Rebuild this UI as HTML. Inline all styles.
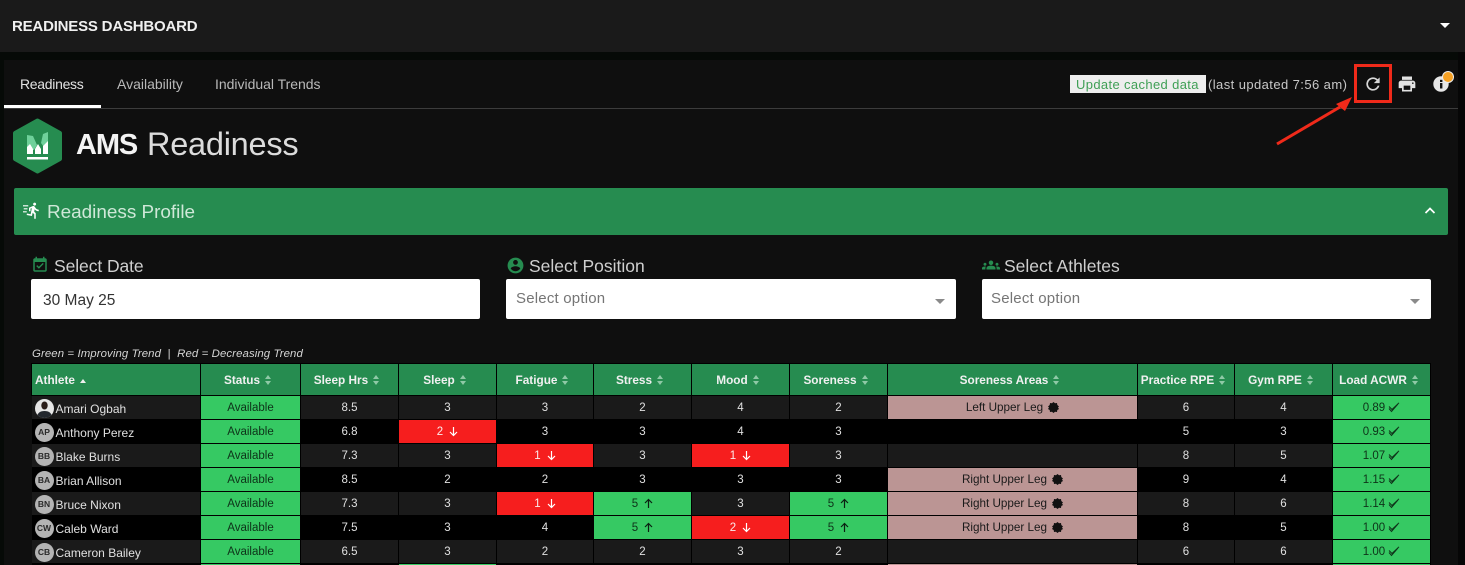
<!DOCTYPE html>
<html><head><meta charset="utf-8"><style>
*{box-sizing:border-box}
html,body{margin:0;padding:0;width:1465px;height:565px;overflow:hidden;background:#060a07;font-family:"Liberation Sans",sans-serif}
#wrap{position:absolute;left:0;top:0;width:1465px;height:565px;overflow:hidden;background:#060a07}
.a{position:absolute;white-space:nowrap}
#top{left:0;top:0;width:1465px;height:52px;background:#1a1a1a}
#card{left:4px;top:60px;width:1454px;height:505px;background:#0f0f0f}
#right{left:1458px;top:52px;width:7px;height:513px;background:#060606}
.tab{top:76px;font-size:14px;line-height:17px;color:#b9b9b9}
.lab{top:256px;font-size:17.5px;line-height:21px;color:#cfcfcf}
.inp{top:279px;height:40px;background:#fff;border-radius:2px}
.ph{top:290px;font-size:15px;line-height:17px;color:#757575;letter-spacing:.2px}
.car{top:299px;width:0;height:0;border-left:5px solid transparent;border-right:5px solid transparent;border-top:5px solid #8a8a8a}
table{position:absolute;left:31px;top:363px;border-collapse:collapse;table-layout:fixed;width:1399px}
th{background:#268c50;color:#f0f0f0;font-size:11.8px;font-weight:bold;height:32px;padding:1px 5px 0 0;border:1px solid #000;text-align:center;white-space:nowrap}
td{height:24px;padding:1px 0 0;font-size:11.5px;line-height:14px;text-align:center;color:#e0e0e0;border:1px solid #000;border-width:0 1px 1px 0;white-space:nowrap}
tr.o td{background:#1a1a1a}
tr.e td{background:#000}
tr td.g{background:#36c963;color:#0e3319}
tr td.r{background:#f61e1e;color:#fbeaea}
tr td.p{background:#bb9594;color:#1a1a1a;font-size:11.7px}
td.n{text-align:left;padding:2px 0 0 3px;font-size:12px}
.av{display:inline-block;width:19px;height:19px;margin:-4px 2px -3px 0;border-radius:50%;background:#b4b4b4;color:#2a2a2a;font-size:8.5px;font-weight:bold;line-height:19px;text-align:center;vertical-align:middle}
.s{display:inline-block;width:7px;height:10px;margin-left:5px;position:relative;vertical-align:-1px}
.s:before,.s:after{content:"";position:absolute;left:0;width:0;height:0;border-left:3.5px solid transparent;border-right:3.5px solid transparent}
.s:before{top:0;border-bottom:4px solid #8fc9a6}
.s:after{bottom:0;border-top:4px solid #8fc9a6}
.u{display:inline-block;width:0;height:0;margin-left:5px;border-left:3.5px solid transparent;border-right:3.5px solid transparent;border-bottom:4px solid #f0f0f0;vertical-align:1px}
td svg{vertical-align:0;margin:-2px 0 -2px 3px}
td svg.ar{margin-left:6px}
</style></head><body>
<div id="wrap">
<div class="a" id="top"></div>
<div class="a" style="left:12px;top:17px;font-size:15px;line-height:19px;font-weight:bold;color:#f0f0f0;letter-spacing:-.2px">READINESS DASHBOARD</div>
<div class="a" style="left:1440px;top:23px;width:0;height:0;border-left:5px solid transparent;border-right:5px solid transparent;border-top:5px solid #fff"></div>
<div class="a" id="right"></div>
<div class="a" id="card"></div>
<div class="a" style="left:4px;top:108px;width:1454px;height:1px;background:#3c3c3c"></div>
<div class="a" style="left:4px;top:105px;width:97px;height:3px;background:#fff"></div>
<div class="a tab" style="left:20px;color:#e2e2e2;letter-spacing:-.3px">Readiness</div>
<div class="a tab" style="left:117px;letter-spacing:0">Availability</div>
<div class="a tab" style="left:215px;letter-spacing:-.02px">Individual Trends</div>

<div class="a" style="left:1070px;top:75px;width:136px;height:18px;background:#eeeeee"></div>
<div class="a" style="left:1076px;top:77px;font-size:13px;line-height:16px;color:#3f9f55;letter-spacing:.36px">Update cached data</div>
<div class="a" style="left:1208px;top:77px;font-size:13px;line-height:16px;color:#c8c8c8;letter-spacing:.42px">(last updated 7:56 am)</div>
<svg class="a" style="left:1363px;top:74px" width="20" height="20" viewBox="0 0 24 24"><path fill="#d8d8d8" d="M17.65 6.35A7.95 7.95 0 0 0 12 4a8 8 0 1 0 7.73 10h-2.08A6 6 0 1 1 12 6c1.66 0 3.14.69 4.22 1.78L13 11h7V4l-2.35 2.35z"/></svg>
<svg class="a" style="left:1397px;top:74px" width="20" height="20" viewBox="0 0 24 24"><path fill="#e2e2e2" d="M19 8H5c-1.66 0-3 1.34-3 3v6h4v4h12v-4h4v-6c0-1.66-1.34-3-3-3zm-3 11H8v-5h8v5zm3-7c-.55 0-1-.45-1-1s.45-1 1-1 1 .45 1 1-.45 1-1 1zm-1-9H6v4h12V3z"/></svg>
<svg class="a" style="left:1433px;top:76px" width="16" height="16" viewBox="0 0 16 16"><circle cx="8" cy="8" r="7.700" fill="#e6e6e6"/><rect x="7" y="7" width="2.400" height="5.500" fill="#111"/><rect x="7" y="3.800" width="2.400" height="2.200" fill="#111"/></svg>
<div class="a" style="left:1443px;top:72px;width:10px;height:10px;border-radius:50%;background:#f6a124;box-shadow:0 0 0 1px #eee"></div>
<div class="a" style="left:1354px;top:64px;width:38px;height:39px;border:3px solid #f02a1a"></div>
<svg class="a" style="left:1270px;top:90px" width="90" height="60" viewBox="0 0 90 60"><line x1="7" y1="54" x2="70" y2="17" stroke="#f02a1a" stroke-width="3"/><polygon points="82,7 66,14 75,21" fill="#f02a1a"/></svg>

<svg class="a" style="left:13px;top:118px" width="50" height="56" viewBox="0 0 50 56"><path fill="#268c50" stroke="#268c50" stroke-width="4" stroke-linejoin="round" d="M24.500 2.500 47 15V41L24.500 53.500 2 41V15z"/><path fill="#6fd09a" d="M14 17l6 1 4 9-3 5h-7zM28 25l2-9 5-2v12l-2 6z"/><path fill="#fff" d="M14 36v-7l3-3 3 5v5zM22 36v-5l3-5 3 5v5zM30 36v-8l5-5v13zM14 39h21v2.500H14z"/></svg>
<div class="a" style="left:76px;top:128px;font-size:29px;line-height:34px;font-weight:bold;color:#f4f4f4;letter-spacing:-1.100px">AMS</div>
<div class="a" style="left:147px;top:125px;font-size:32.500px;line-height:38px;color:#dcdcdc;letter-spacing:-.25px">Readiness</div>

<div class="a" style="left:14px;top:188px;width:1434px;height:47px;background:#268c50;border-radius:2px"></div>
<svg class="a" style="left:23px;top:201px" width="18" height="19" viewBox="0 0 24 24"><path fill="#fff" d="M15.490 5.480c1.100 0 2-.9 2-2s-.9-2-2-2-2 .9-2 2 .9 2 2 2zm-3.600 13.900l1-4.400 2.100 2v6h2v-7.500l-2.100-2 .6-3c1.300 1.500 3.300 2.500 5.500 2.500v-2c-1.900 0-3.500-1-4.300-2.400l-1-1.600c-.4-.6-1-1-1.700-1-.3 0-.5.1-.8.1l-5.200 2.200v4.700h2v-3.400l1.800-.7-1.600 8.100-4.900-1-.4 2 7 1.400zM0 5h7v1.500H0zM1 9h5v1.500H1zM0 13h5v1.500H0z"/></svg>
<div class="a" style="left:47px;top:201px;font-size:18.900px;line-height:24px;color:#cfe8d8;letter-spacing:0">Readiness Profile</div>
<svg class="a" style="left:1424px;top:206px" width="12" height="9" viewBox="0 0 12 9"><path d="M1.500 7 6 2.500 10.500 7" fill="none" stroke="#fff" stroke-width="1.700"/></svg>

<svg class="a" style="left:31px;top:256px" width="18" height="18" viewBox="0 0 24 24"><path fill="#268c50" d="M19 3h-1V1h-2v2H8V1H6v2H5c-1.100 0-2 .9-2 2v14c0 1.100.9 2 2 2h14c1.100 0 2-.9 2-2V5c0-1.100-.9-2-2-2zm0 16H5V8h14v11zm-8.500-2L7 13.500l1.300-1.300 2.200 2.200 5.200-5.200 1.300 1.300z"/></svg>
<div class="a lab" style="left:54px;letter-spacing:-.08px">Select Date</div>
<div class="a inp" style="left:31px;width:449px"></div>
<div class="a" style="left:43px;top:292px;font-size:15.500px;line-height:17px;color:#333">30 May 25</div>

<svg class="a" style="left:506px;top:256px" width="19" height="19" viewBox="0 0 24 24"><path fill="#268c50" d="M12 2C6.480 2 2 6.480 2 12s4.480 10 10 10 10-4.480 10-10S17.520 2 12 2zm0 3c1.660 0 3 1.340 3 3s-1.340 3-3 3-3-1.340-3-3 1.340-3 3-3zm0 14.200c-2.500 0-4.710-1.280-6-3.220.03-1.990 4-3.080 6-3.080 1.990 0 5.970 1.090 6 3.080-1.290 1.940-3.500 3.220-6 3.220z"/></svg>
<div class="a lab" style="left:529px">Select Position</div>
<div class="a inp" style="left:506px;width:450px"></div>
<div class="a ph" style="left:516px">Select option</div>
<div class="a car" style="left:935px"></div>

<svg class="a" style="left:982px;top:256px" width="18" height="18" viewBox="0 0 24 24"><path fill="#268c50" d="M12 12.750c1.630 0 3.070.39 4.240.9 1.080.48 1.760 1.560 1.760 2.730V18H6v-1.610c0-1.180.68-2.260 1.760-2.730 1.170-.52 2.610-.91 4.240-.91zM4 13c1.100 0 2-.9 2-2s-.9-2-2-2-2 .9-2 2 .9 2 2 2zm1.130 1.100C4.760 14.040 4.390 14 4 14c-.99 0-1.930.21-2.780.58C.48 14.900 0 15.620 0 16.430V18h4.500v-1.610c0-.83.23-1.610.63-2.290zM20 13c1.100 0 2-.9 2-2s-.9-2-2-2-2 .9-2 2 .9 2 2 2zm4 3.430c0-.81-.48-1.530-1.220-1.850C21.930 14.210 20.990 14 20 14c-.39 0-.76.04-1.130.1.4.68.63 1.460.63 2.290V18H24v-1.570zM12 6c1.660 0 3 1.340 3 3s-1.340 3-3 3-3-1.340-3-3 1.340-3 3-3z"/></svg>
<div class="a lab" style="left:1004px">Select Athletes</div>
<div class="a inp" style="left:982px;width:449px"></div>
<div class="a ph" style="left:991px">Select option</div>
<div class="a car" style="left:1410px"></div>

<div class="a" style="left:32px;top:347px;font-size:11.400px;line-height:14px;font-style:italic;color:#d4d4d4;letter-spacing:.1px">Green = Improving Trend &nbsp;|&nbsp; Red = Decreasing Trend</div>

<table>
<colgroup><col style="width:169px"><col style="width:100px"><col style="width:98px"><col style="width:98px"><col style="width:97px"><col style="width:98px"><col style="width:98px"><col style="width:98px"><col style="width:250px"><col style="width:97px"><col style="width:98px"><col style="width:98px"></colgroup>
<tr><th style="text-align:left;padding-left:3px">Athlete<span class="u"></span></th><th>Status<span class="s"></span></th><th>Sleep Hrs<span class="s"></span></th><th>Sleep<span class="s"></span></th><th>Fatigue<span class="s"></span></th><th>Stress<span class="s"></span></th><th>Mood<span class="s"></span></th><th>Soreness<span class="s"></span></th><th>Soreness Areas<span class="s"></span></th><th>Practice RPE<span class="s"></span></th><th>Gym RPE<span class="s"></span></th><th>Load ACWR<span class="s"></span></th></tr>
<tr class="o"><td class="n"><span class="av" style="background:#e6e6e6;overflow:hidden"><svg width="19" height="19" viewBox="0 0 19 19" style="display:block;margin:0"><ellipse cx="9.500" cy="6.500" rx="3.200" ry="4" fill="#2a1d18"/><path fill="#23282e" d="M2 19c0-5 3-7 7.500-7S17 14 17 19z"/></svg></span>Amari Ogbah</td><td class="g">Available</td><td>8.5</td><td>3</td><td>3</td><td>2</td><td>4</td><td>2</td><td class="p">Left Upper Leg<svg width="11" height="11" viewBox="0 0 11 11" style="margin-left:5px"><path fill="#111" d="M5.500 0 7 1.300 9 1 9.300 3 11 4.500 10 5.500 11 7 9.300 8 9 10 7 9.700 5.500 11 4 9.700 2 10 1.700 8 0 7 1 5.500 0 4.500 1.700 3 2 1 4 1.300z"/></svg></td><td>6</td><td>4</td><td class="g">0.89<svg width="12" height="11" viewBox="0 0 12 11"><path d="M1 6.500l2.500 3L10 2M1 4.500l3 3L11 .8" fill="none" stroke="#0e3319" stroke-width="1"/></svg></td></tr>
<tr class="e"><td class="n"><span class="av">AP</span>Anthony Perez</td><td class="g">Available</td><td>6.8</td><td class="r">2<svg class="ar" width="9" height="11" viewBox="0 0 9 11"><path d="M4.500 1v8.500M1 6l3.500 3.500L8 6" fill="none" stroke="#fff" stroke-width="1.200"/></svg></td><td>3</td><td>3</td><td>4</td><td>3</td><td></td><td>5</td><td>3</td><td class="g">0.93<svg width="12" height="11" viewBox="0 0 12 11"><path d="M1 6.500l2.500 3L10 2M1 4.500l3 3L11 .8" fill="none" stroke="#0e3319" stroke-width="1"/></svg></td></tr>
<tr class="o"><td class="n"><span class="av">BB</span>Blake Burns</td><td class="g">Available</td><td>7.3</td><td>3</td><td class="r">1<svg class="ar" width="9" height="11" viewBox="0 0 9 11"><path d="M4.500 1v8.500M1 6l3.500 3.500L8 6" fill="none" stroke="#fff" stroke-width="1.200"/></svg></td><td>3</td><td class="r">1<svg class="ar" width="9" height="11" viewBox="0 0 9 11"><path d="M4.500 1v8.500M1 6l3.500 3.500L8 6" fill="none" stroke="#fff" stroke-width="1.200"/></svg></td><td>3</td><td></td><td>8</td><td>5</td><td class="g">1.07<svg width="12" height="11" viewBox="0 0 12 11"><path d="M1 6.500l2.500 3L10 2M1 4.500l3 3L11 .8" fill="none" stroke="#0e3319" stroke-width="1"/></svg></td></tr>
<tr class="e"><td class="n"><span class="av">BA</span>Brian Allison</td><td class="g">Available</td><td>8.5</td><td>2</td><td>2</td><td>3</td><td>3</td><td>3</td><td class="p">Right Upper Leg<svg width="11" height="11" viewBox="0 0 11 11" style="margin-left:5px"><path fill="#111" d="M5.500 0 7 1.300 9 1 9.300 3 11 4.500 10 5.500 11 7 9.300 8 9 10 7 9.700 5.500 11 4 9.700 2 10 1.700 8 0 7 1 5.500 0 4.500 1.700 3 2 1 4 1.300z"/></svg></td><td>9</td><td>4</td><td class="g">1.15<svg width="12" height="11" viewBox="0 0 12 11"><path d="M1 6.500l2.500 3L10 2M1 4.500l3 3L11 .8" fill="none" stroke="#0e3319" stroke-width="1"/></svg></td></tr>
<tr class="o"><td class="n"><span class="av">BN</span>Bruce Nixon</td><td class="g">Available</td><td>7.3</td><td>3</td><td class="r">1<svg class="ar" width="9" height="11" viewBox="0 0 9 11"><path d="M4.500 1v8.500M1 6l3.500 3.500L8 6" fill="none" stroke="#fff" stroke-width="1.200"/></svg></td><td class="g">5<svg class="ar" width="9" height="11" viewBox="0 0 9 11"><path d="M4.500 10V1.500M1 5l3.500-3.500L8 5" fill="none" stroke="#0b2012" stroke-width="1.200"/></svg></td><td>3</td><td class="g">5<svg class="ar" width="9" height="11" viewBox="0 0 9 11"><path d="M4.500 10V1.500M1 5l3.500-3.500L8 5" fill="none" stroke="#0b2012" stroke-width="1.200"/></svg></td><td class="p">Right Upper Leg<svg width="11" height="11" viewBox="0 0 11 11" style="margin-left:5px"><path fill="#111" d="M5.500 0 7 1.300 9 1 9.300 3 11 4.500 10 5.500 11 7 9.300 8 9 10 7 9.700 5.500 11 4 9.700 2 10 1.700 8 0 7 1 5.500 0 4.500 1.700 3 2 1 4 1.300z"/></svg></td><td>8</td><td>6</td><td class="g">1.14<svg width="12" height="11" viewBox="0 0 12 11"><path d="M1 6.500l2.500 3L10 2M1 4.500l3 3L11 .8" fill="none" stroke="#0e3319" stroke-width="1"/></svg></td></tr>
<tr class="e"><td class="n"><span class="av">CW</span>Caleb Ward</td><td class="g">Available</td><td>7.5</td><td>3</td><td>4</td><td class="g">5<svg class="ar" width="9" height="11" viewBox="0 0 9 11"><path d="M4.500 10V1.500M1 5l3.500-3.500L8 5" fill="none" stroke="#0b2012" stroke-width="1.200"/></svg></td><td class="r">2<svg class="ar" width="9" height="11" viewBox="0 0 9 11"><path d="M4.500 1v8.500M1 6l3.500 3.500L8 6" fill="none" stroke="#fff" stroke-width="1.200"/></svg></td><td class="g">5<svg class="ar" width="9" height="11" viewBox="0 0 9 11"><path d="M4.500 10V1.500M1 5l3.500-3.500L8 5" fill="none" stroke="#0b2012" stroke-width="1.200"/></svg></td><td class="p">Right Upper Leg<svg width="11" height="11" viewBox="0 0 11 11" style="margin-left:5px"><path fill="#111" d="M5.500 0 7 1.300 9 1 9.300 3 11 4.500 10 5.500 11 7 9.300 8 9 10 7 9.700 5.500 11 4 9.700 2 10 1.700 8 0 7 1 5.500 0 4.500 1.700 3 2 1 4 1.300z"/></svg></td><td>8</td><td>5</td><td class="g">1.00<svg width="12" height="11" viewBox="0 0 12 11"><path d="M1 6.500l2.500 3L10 2M1 4.500l3 3L11 .8" fill="none" stroke="#0e3319" stroke-width="1"/></svg></td></tr>
<tr class="o"><td class="n"><span class="av">CB</span>Cameron Bailey</td><td class="g">Available</td><td>6.5</td><td>3</td><td>2</td><td>2</td><td>3</td><td>2</td><td></td><td>6</td><td>6</td><td class="g">1.00<svg width="12" height="11" viewBox="0 0 12 11"><path d="M1 6.500l2.500 3L10 2M1 4.500l3 3L11 .8" fill="none" stroke="#0e3319" stroke-width="1"/></svg></td></tr>
<tr class="e"><td></td><td class="g"></td><td></td><td class="g"></td><td></td><td></td><td></td><td></td><td class="p"></td><td></td><td></td><td class="g"></td></tr>
</table>
</div>
</body></html>
